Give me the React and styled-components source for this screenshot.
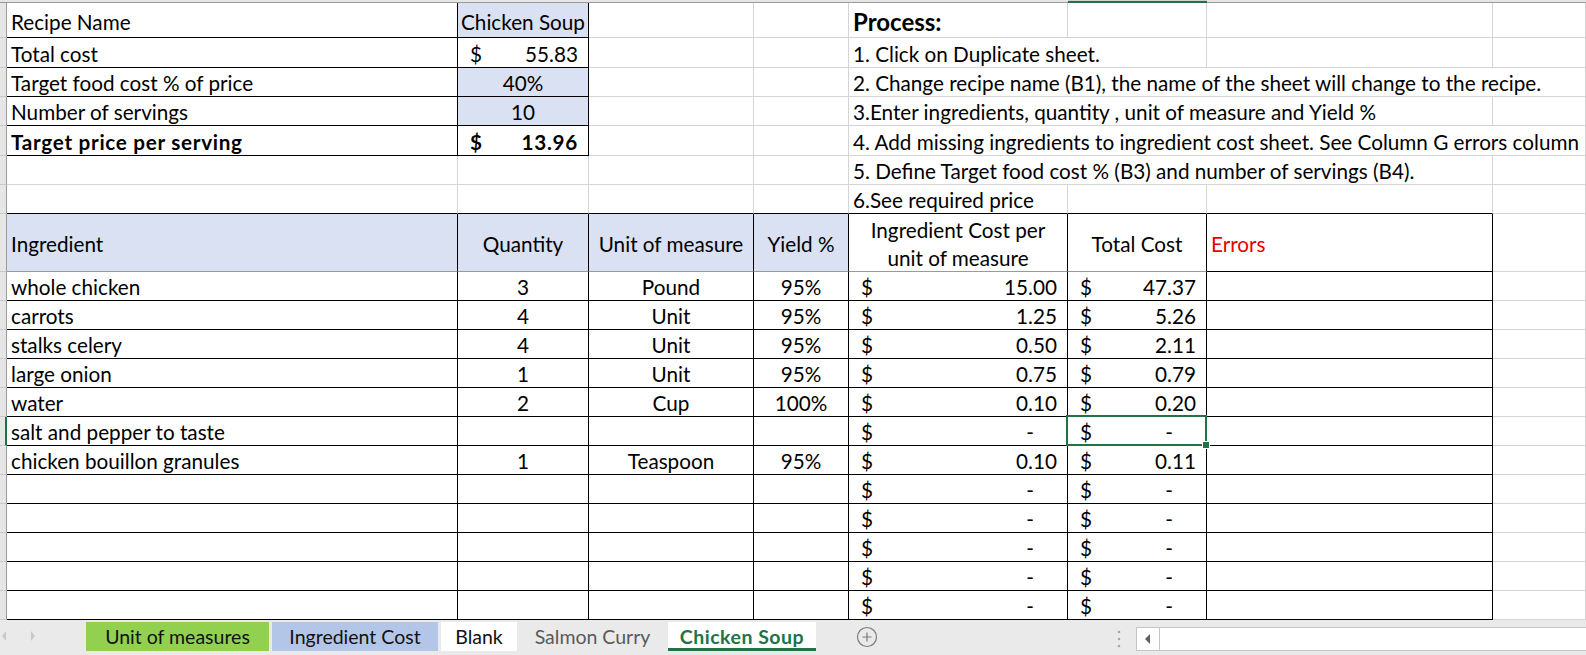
import React from 'react';
import styled, { createGlobalStyle } from 'styled-components';

const GlobalStyle = createGlobalStyle`
  html, body {
    margin: 0;
    padding: 0;
    background: #fff;
    overflow: hidden;
  }
  body {
    font-family: Lato, "Open Sans", sans-serif;
  }
`;

const Window = styled.div`
  width: 1586px;
  height: 655px;
  display: flex;
  flex-direction: column;
  overflow: hidden;
`;

const Sheet = styled.div`
  display: grid;
  grid-template-columns: 7px 451px 131px 165px 95px 219px 139px 286px 1fr;
  grid-template-rows: 3px 35px 30px 29px 29px 30px 29px 29px 58px repeat(12, 29px);
  flex: none;
  color: #000;
`;

const ColHead = styled.div`
  box-sizing: border-box;
  background: ${({ $active }) => ($active ? '#d2d2d2' : '#e6e6e6')};
  border-bottom: ${({ $active }) => ($active ? '2px solid #217346' : '1px solid #9b9b9b')};
`;

const RowHead = styled.div`
  box-sizing: border-box;
  background: #e6e6e6;
  border-right: ${({ $active }) => ($active ? '2px solid #217346' : '1px solid #9b9b9b')};
  border-bottom: 1px solid #c8c8c8;
`;

const bottomColor = (b) => (b === 'black' ? '#000' : b === 'mid' ? '#9a9a9a' : '#d4d4d4');

const Cell = styled.div`
  box-sizing: border-box;
  min-width: 0;
  position: relative;
  display: flex;
  align-items: ${({ $middle }) => ($middle ? 'center' : 'flex-end')};
  justify-content: ${({ $align }) =>
    $align === 'center' ? 'center' : $align === 'right' ? 'flex-end' : 'flex-start'};
  padding: ${({ $middle, $lift }) => ($middle ? '3px 4px 0' : `0 4px ${$lift ? 2 : 0}px`)};
  grid-column: ${({ $span }) => ($span ? `span ${$span}` : 'auto')};
  border-right: 1px solid ${({ $r }) => ($r ? '#000' : '#d4d4d4')};
  border-bottom: 1px solid ${({ $b }) => bottomColor($b)};
  background: ${({ $fill }) => ($fill ? '#d9e1f2' : '#fff')};
  color: ${({ $red }) => ($red ? '#e60000' : '#000')};
  font-weight: ${({ $bold }) => ($bold ? 700 : 400)};
  letter-spacing: ${({ $bold, $title }) => ($bold && !$title ? '0.7px' : 'normal')};
  font-size: ${({ $title }) => ($title ? '24px' : '20.7px')};
  line-height: 1.2;
  white-space: nowrap;
`;

const Money = styled(Cell)`
  justify-content: space-between;
  padding: 0 ${({ $dash }) => ($dash ? '33px' : '10px')} 0 12px;
`;

const HeadLines = styled.div`
  text-align: center;
  line-height: 28.5px;
  white-space: nowrap;
`;

const Selection = styled.div`
  position: absolute;
  top: -2px;
  left: -2px;
  right: -1px;
  bottom: -1px;
  border: 2px solid #217346;
  z-index: 2;
  pointer-events: none;

  &::after {
    content: '';
    position: absolute;
    right: -5px;
    bottom: -5px;
    width: 6px;
    height: 6px;
    background: #217346;
    border: 1px solid #fff;
  }
`;

const TabBar = styled.div`
  flex: none;
  height: 35px;
  box-sizing: border-box;
  display: flex;
  align-items: flex-start;
  padding-top: 2px;
  background: #eaeaea;
`;

const NavArrows = styled.svg`
  flex: none;
  width: 86px;
  height: 29px;
`;

const Tabs = styled.div`
  display: flex;
  align-items: stretch;
  height: 29px;
`;

const Tab = styled.div`
  position: relative;
  box-sizing: border-box;
  width: ${({ $w }) => $w}px;
  display: flex;
  align-items: center;
  justify-content: center;
  font-size: 19.5px;
  background: ${({ $bg }) => $bg || 'transparent'};
  color: ${({ $active, $muted }) => ($active ? '#217346' : $muted ? '#5a5a5a' : '#111')};
  font-weight: ${({ $active }) => ($active ? 700 : 400)};
  letter-spacing: ${({ $active }) => ($active ? '0.5px' : 'normal')};
  box-shadow: ${({ $active }) => ($active ? 'inset 0 -3px 0 #217346' : 'none')};
  white-space: nowrap;

  & + & {
    margin-left: 3px;
  }
  & + &::before {
    content: '';
    position: absolute;
    left: -2px;
    top: 2px;
    bottom: 2px;
    width: 1px;
    background: #c4c4c4;
  }
`;

const AddSheet = styled.svg`
  flex: none;
  width: 22px;
  height: 22px;
  margin: 4px 0 0 40px;
`;

const RightGroup = styled.div`
  margin-left: auto;
  align-self: center;
  display: flex;
  align-items: center;
`;

const Dots = styled.svg`
  width: 4px;
  height: 18px;
  margin-right: 15px;
`;

const HScroll = styled.div`
  width: 450px;
  height: 24px;
  box-sizing: border-box;
  background: #fff;
  border: 1px solid #c6c6c6;
  border-right: none;
  display: flex;
`;

const ScrollBtn = styled.div`
  width: 23px;
  box-sizing: border-box;
  border-right: 1px solid #c6c6c6;
  display: flex;
  align-items: center;
  justify-content: center;
`;

const ingredients = [
  { name: 'whole chicken', qty: '3', unit: 'Pound', yld: '95%', cost: '15.00', total: '47.37' },
  { name: 'carrots', qty: '4', unit: 'Unit', yld: '95%', cost: '1.25', total: '5.26' },
  { name: 'stalks celery', qty: '4', unit: 'Unit', yld: '95%', cost: '0.50', total: '2.11' },
  { name: 'large onion', qty: '1', unit: 'Unit', yld: '95%', cost: '0.75', total: '0.79' },
  { name: 'water', qty: '2', unit: 'Cup', yld: '100%', cost: '0.10', total: '0.20' },
  { name: 'salt and pepper to taste', qty: '', unit: '', yld: '', cost: null, total: null, selected: true },
  { name: 'chicken bouillon granules', qty: '1', unit: 'Teaspoon', yld: '95%', cost: '0.10', total: '0.11' },
  { name: '', qty: '', unit: '', yld: '', cost: null, total: null },
  { name: '', qty: '', unit: '', yld: '', cost: null, total: null },
  { name: '', qty: '', unit: '', yld: '', cost: null, total: null },
  { name: '', qty: '', unit: '', yld: '', cost: null, total: null },
  { name: '', qty: '', unit: '', yld: '', cost: null, total: null },
];

const sheets = [
  { name: 'Unit of measures', bg: '#92d050', w: 183 },
  { name: 'Ingredient Cost', bg: '#b4c6e7', w: 166 },
  { name: 'Blank', bg: '#fff', w: 76 },
  { name: 'Salmon Curry', muted: true, w: 145 },
  { name: 'Chicken Soup', bg: '#fff', active: true, w: 148 },
];

const Amount = ({ value, selected }) => (
  <Money $r $b="black" $dash={value === null}>
    <span>$</span>
    <span>{value === null ? '-' : value}</span>
    {selected && <Selection />}
  </Money>
);

export default function App() {
  return (
    <Window>
      <GlobalStyle />
      <Sheet>
        {Array.from({ length: 9 }).map((_, i) => (
          <ColHead key={i} $active={i === 6} />
        ))}

        <RowHead />
        <Cell $r $b="black" $lift>Recipe Name</Cell>
        <Cell $r $b="black" $lift $fill $align="center">Chicken Soup</Cell>
        <Cell />
        <Cell />
        <Cell $title $bold>Process:</Cell>
        <Cell />
        <Cell />
        <Cell />

        <RowHead />
        <Cell $r $b="black">Total cost</Cell>
        <Money $r $b="black">
          <span>$</span>
          <span>55.83</span>
        </Money>
        <Cell />
        <Cell />
        <Cell $span={2}>1. Click on Duplicate sheet.</Cell>
        <Cell />
        <Cell />

        <RowHead />
        <Cell $r $b="black">Target food cost % of price</Cell>
        <Cell $r $b="black" $fill $align="center">40%</Cell>
        <Cell />
        <Cell />
        <Cell $span={4}>2. Change recipe name (B1), the name of the sheet will change to the recipe.</Cell>

        <RowHead />
        <Cell $r $b="black">Number of servings</Cell>
        <Cell $r $b="black" $fill $align="center">10</Cell>
        <Cell />
        <Cell />
        <Cell $span={3}>3.Enter ingredients, quantity , unit of measure and Yield %</Cell>
        <Cell />

        <RowHead />
        <Cell $r $b="black" $bold>Target price per serving</Cell>
        <Money $r $b="black" $bold>
          <span>$</span>
          <span>13.96</span>
        </Money>
        <Cell />
        <Cell />
        <Cell $span={4}>4. Add missing ingredients to ingredient cost sheet. See Column G errors column</Cell>

        <RowHead />
        <Cell />
        <Cell />
        <Cell />
        <Cell />
        <Cell $span={3}>5. Define Target food cost % (B3) and number of servings (B4).</Cell>
        <Cell />

        <RowHead />
        <Cell $b="black" />
        <Cell $b="black" />
        <Cell $b="black" />
        <Cell $b="black" />
        <Cell $b="black">6.See required price</Cell>
        <Cell $b="black" />
        <Cell $b="black" />
        <Cell />

        <RowHead />
        <Cell $middle $r $b="mid" $fill>Ingredient</Cell>
        <Cell $middle $r $b="mid" $fill $align="center">Quantity</Cell>
        <Cell $middle $r $b="mid" $fill $align="center">Unit of measure</Cell>
        <Cell $middle $r $b="mid" $fill $align="center">Yield %</Cell>
        <Cell $middle $r $b="mid" $align="center">
          <HeadLines>
            Ingredient Cost per
            <br />
            unit of measure
          </HeadLines>
        </Cell>
        <Cell $middle $r $b="mid" $align="center">Total Cost</Cell>
        <Cell $middle $r $b="black" $red>Errors</Cell>
        <Cell $middle />

        {ingredients.map((row, i) => (
          <React.Fragment key={i}>
            <RowHead $active={row.selected} />
            <Cell $r $b="black">{row.name}</Cell>
            <Cell $r $b="black" $align="center">{row.qty}</Cell>
            <Cell $r $b="black" $align="center">{row.unit}</Cell>
            <Cell $r $b="black" $align="center">{row.yld}</Cell>
            <Amount value={row.cost} />
            <Amount value={row.total} selected={row.selected} />
            <Cell $r $b="black" />
            <Cell />
          </React.Fragment>
        ))}
      </Sheet>

      <TabBar>
        <NavArrows viewBox="0 0 86 29">
          <path d="M6 9 L2 14 L6 19 Z" fill="#c9c9c9" />
          <path d="M31 9 L35 14 L31 19 Z" fill="#c9c9c9" />
        </NavArrows>
        <Tabs>
          {sheets.map((s) => (
            <Tab key={s.name} $bg={s.bg} $active={s.active} $muted={s.muted} $w={s.w}>
              {s.name}
            </Tab>
          ))}
        </Tabs>
        <AddSheet viewBox="0 0 22 22">
          <circle cx="11" cy="11" r="9.5" fill="none" stroke="#7a7a7a" strokeWidth="1.2" />
          <path d="M11 6.5 V15.5 M6.5 11 H15.5" stroke="#7a7a7a" strokeWidth="1.2" />
        </AddSheet>
        <RightGroup>
          <Dots viewBox="0 0 4 18">
            <circle cx="2" cy="2" r="1.3" fill="#a8a8a8" />
            <circle cx="2" cy="9" r="1.3" fill="#a8a8a8" />
            <circle cx="2" cy="16" r="1.3" fill="#a8a8a8" />
          </Dots>
          <HScroll>
            <ScrollBtn>
              <svg width="6" height="10" viewBox="0 0 6 10">
                <path d="M5 0 L0 5 L5 10 Z" fill="#606060" />
              </svg>
            </ScrollBtn>
          </HScroll>
        </RightGroup>
      </TabBar>
    </Window>
  );
}
